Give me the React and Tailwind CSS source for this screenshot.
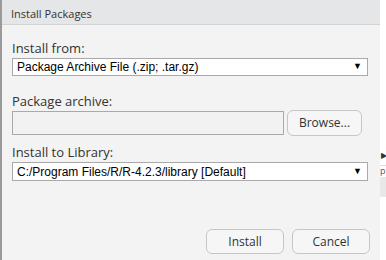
export default function App() {
  const label = "text-[13px] leading-[14px] text-[#333]";
  const ui = { fontFamily: '"Open Sans", "Noto Sans", sans-serif' };
  const arial = { fontFamily: '"Liberation Sans", Arial, sans-serif' };

  return (
    <div className="w-[386px] h-[260px] overflow-hidden bg-white flex" style={ui}>
      <div className="w-[380px] h-[260px] shrink-0 flex flex-col border-l-2 border-[#9a9a9a] bg-[#f2f3f2] shadow-[2px_0_3px_rgba(0,0,0,0.25)]">
        <div className="h-[25px] shrink-0 bg-[#e5e6e7] border-b border-[#d2d3d4] flex items-center pl-[9px] pt-[2px]">
          <span className="text-[11px] leading-none text-[#333]">Install Packages</span>
        </div>

        <div className="flex-1 flex flex-col pl-[10px] pr-[10px] pt-[16px]">
          <div className={label + " mb-[3px]"}>Install from:</div>
          <div className="w-[356px] h-[18px] bg-white border border-[#a9a9a9] flex items-center justify-between pl-[4px] pr-[5px]" style={arial}>
            <span className="text-[12px] text-black leading-none">Package Archive File (.zip; .tar.gz)</span>
            <span className="text-[9px] text-black">▼</span>
          </div>

          <div className={label + " mt-[18px] mb-[2px]"}>Package archive:</div>
          <div className="flex items-center gap-[3px]">
            <div className="w-[272px] h-[24px] bg-[#f2f2f2] border border-[#a9a9a9]" />
            <button className="w-[75px] h-[26px] rounded-[6px] border border-[#c6c6c6] bg-[#f6f6f6] text-[12px] text-[#333] flex items-center justify-center">
              Browse...
            </button>
          </div>

          <div className={label + " mt-[9px] mb-[3px]"}>Install to Library:</div>
          <div className="w-[356px] h-[19px] bg-white border border-[#a9a9a9] flex items-center justify-between pl-[4px] pr-[5px]" style={arial}>
            <span className="text-[12px] text-black leading-none">C:/Program Files/R/R-4.2.3/library [Default]</span>
            <span className="text-[9px] text-black">▼</span>
          </div>

          <div className="flex justify-end gap-[8px] mt-[48px]">
            <button className="w-[78px] h-[25px] rounded-[6px] border border-[#c6c6c6] bg-[#f6f6f6] text-[12px] text-[#333] flex items-center justify-center">
              Install
            </button>
            <button className="w-[78px] h-[25px] rounded-[6px] border border-[#c6c6c6] bg-[#f6f6f6] text-[12px] text-[#333] flex items-center justify-center">
              Cancel
            </button>
          </div>
        </div>
      </div>

      <div className="flex-1 flex flex-col bg-white pt-[151px]">
        <span className="text-[8px] leading-none text-[#333] pl-[1px]">▶</span>
        <div className="h-[12px] mt-[6px] border-t border-[#ddd] text-[9px] leading-none text-[#555]">p</div>
        <div className="h-[20px] bg-[#e8e8e8]" />
      </div>
    </div>
  );
}
